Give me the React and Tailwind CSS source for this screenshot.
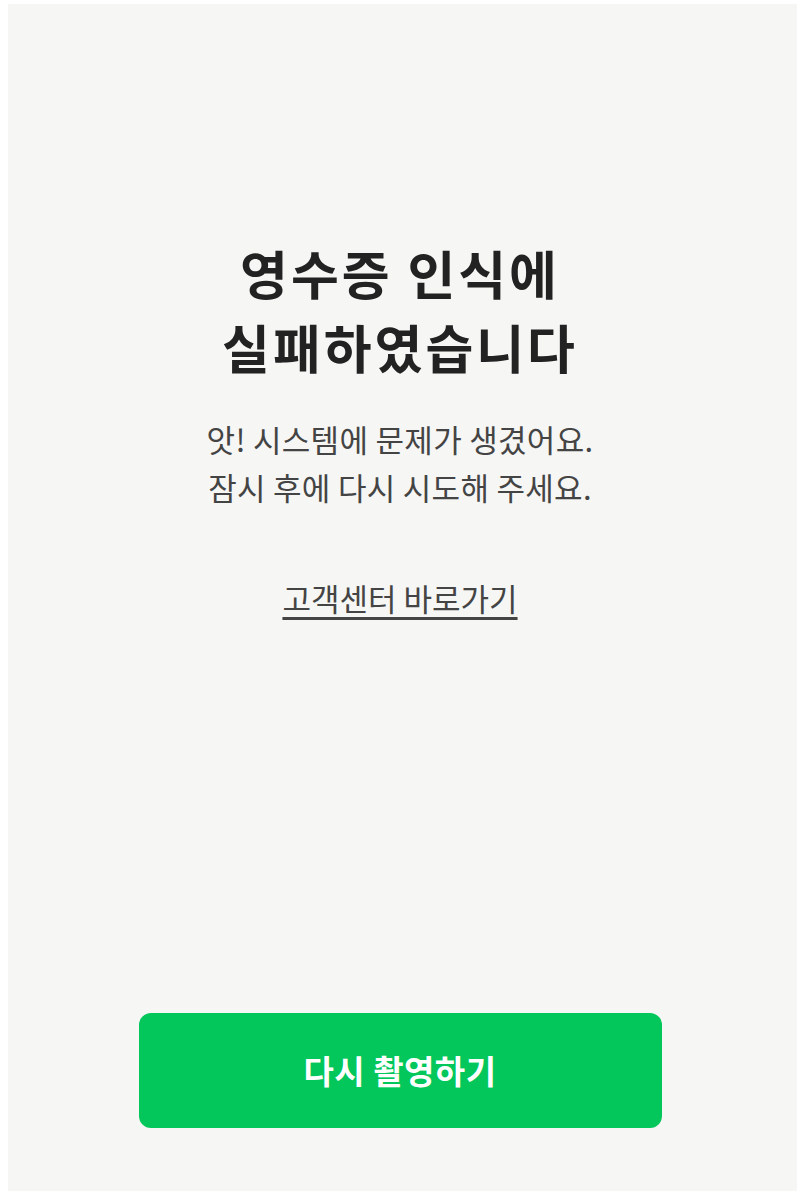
import React from 'react';

const font = { fontFamily: '"Noto Sans CJK KR", "Noto Sans", sans-serif' };

function App() {
  // 다시 촬영하기 버튼 클릭
  const handleRetry = () => {};

  return (
    <div className="w-[800px] h-[1194px] bg-white pl-2 pt-1 pr-[3px] pb-[3px]" style={font}>
      <div className="flex h-full flex-col items-center bg-[#f6f6f4] pr-[5px]">
        <div className="flex flex-col items-center pt-[232px]">
          <h1 className="text-center text-[52px] font-bold leading-[74px] tracking-[3px] text-[#222222]">
            영수증 인식에
            <br />
            실패하였습니다
          </h1>
          <p className="mt-[31px] text-center text-[31px] leading-[48px] tracking-[0.3px] text-[#444444]">
            앗! 시스템에 문제가 생겼어요.
            <br />
            잠시 후에 다시 시도해 주세요.
          </p>
          <a href="#" className="mt-[67px] text-[31px] leading-[40px] text-[#444444] underline underline-offset-[6px]">
            고객센터 바로가기
          </a>
        </div>
        <div className="flex-1" />
        <button
          onClick={handleRetry}
          className="mb-[63px] flex h-[115px] w-[523px] items-center justify-center rounded-xl bg-[#03c75a] text-[33px] font-bold tracking-[0.5px] text-white"
        >
          다시 촬영하기
        </button>
      </div>
    </div>
  );
}

export default App;
